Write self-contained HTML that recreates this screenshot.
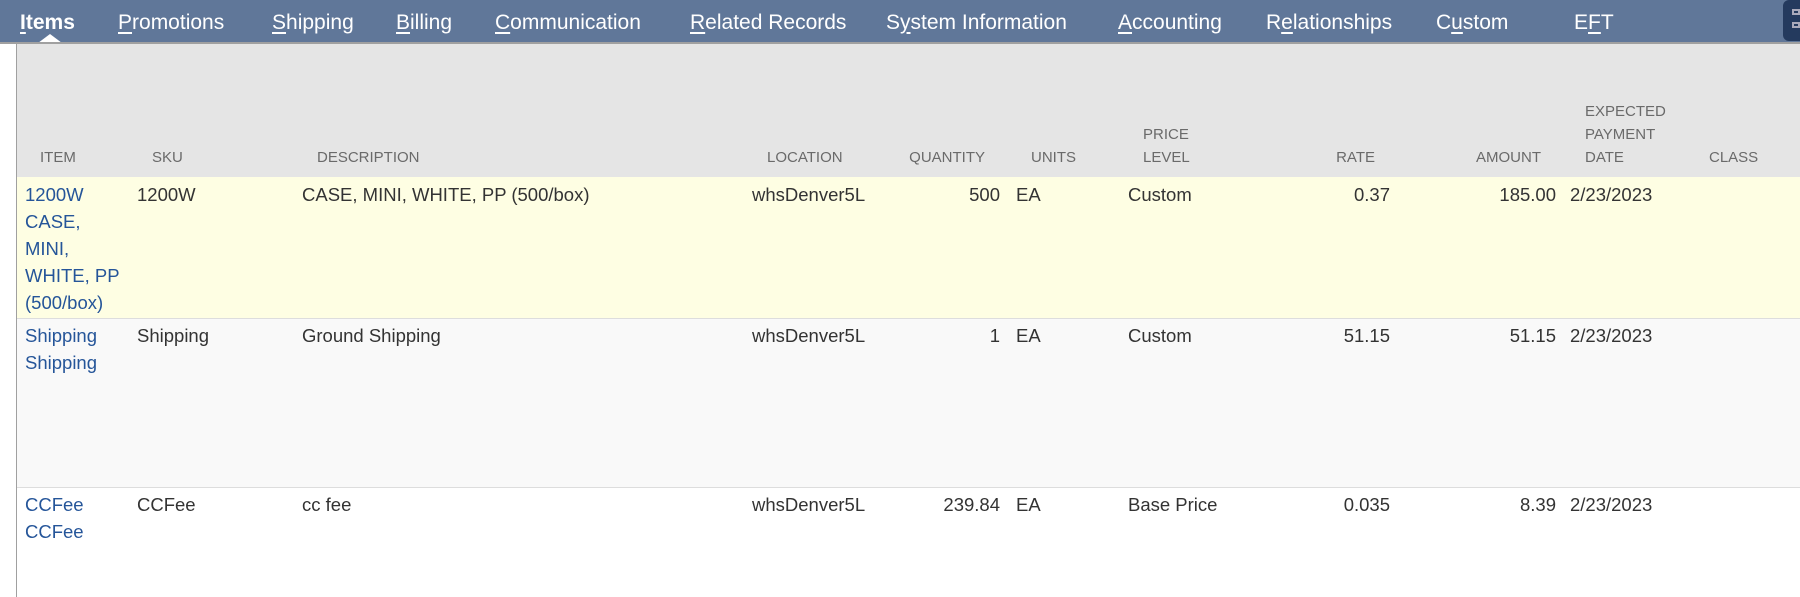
<!DOCTYPE html>
<html><head><meta charset="utf-8"><style>
*{margin:0;padding:0;box-sizing:border-box}
body{width:1800px;height:597px;overflow:hidden;background:#fff;font-family:"Liberation Sans",sans-serif;position:relative}
.bar{position:absolute;left:0;top:0;width:1800px;height:42px;background:#607799}
.tab{position:absolute;top:11px;font-size:21px;color:#fff;white-space:nowrap;letter-spacing:0px}
.tab u{text-decoration:underline;text-underline-offset:3px}
.line{position:absolute;left:0;top:42px;width:1800px;height:2px;background:#a0a0a0}
.lb{position:absolute;left:16px;top:44px;width:1px;height:553px;background:#a0a0a0}
.hdr{position:absolute;left:17px;top:44px;width:1783px;height:133px;background:#e5e5e5}
.h{position:absolute;font-size:15px;color:#6a6a6a;line-height:23px;white-space:nowrap}
.row{position:absolute;left:17px;width:1783px;border-bottom:1px solid #ddd}
.c{position:absolute;font-size:18.5px;color:#333;line-height:27px;white-space:nowrap}
.a{color:#255599}
.r{text-align:right}
</style></head><body>
<div class="bar"></div>
<div class="tab" style="left:20px;font-weight:bold"><u>I</u>tems</div>
<div style="position:absolute;left:38px;top:34px;width:0;height:0;border-left:12px solid transparent;border-right:12px solid transparent;border-bottom:9px solid #fff"></div>
<div class="tab" style="left:118px"><u>P</u>romotions</div>
<div class="tab" style="left:272px"><u>S</u>hipping</div>
<div class="tab" style="left:396px"><u>B</u>illing</div>
<div class="tab" style="left:495px"><u>C</u>ommunication</div>
<div class="tab" style="left:690px"><u>R</u>elated Records</div>
<div class="tab" style="left:886px">S<u>y</u>stem Information</div>
<div class="tab" style="left:1118px"><u>A</u>ccounting</div>
<div class="tab" style="left:1266px">R<u>e</u>lationships</div>
<div class="tab" style="left:1436px">C<u>u</u>stom</div>
<div class="tab" style="left:1574px">E<u>F</u>T</div>
<div style="position:absolute;left:1783px;top:0;width:30px;height:41px;background:#243a5e;border-radius:6px"></div>
<div style="position:absolute;left:1792px;top:9px;width:8px;height:6px;border:2px solid #aab"></div>
<div style="position:absolute;left:1792px;top:22px;width:8px;height:6px;border:2px solid #aab"></div>
<div class="line"></div>
<div class="hdr"></div>
<div class="lb"></div>
<div class="h" style="left:40px;top:146px">ITEM</div>
<div class="h" style="left:152px;top:146px">SKU</div>
<div class="h" style="left:317px;top:146px">DESCRIPTION</div>
<div class="h" style="left:767px;top:146px">LOCATION</div>
<div class="h r" style="left:885px;width:100px;top:146px">QUANTITY</div>
<div class="h" style="left:1031px;top:146px">UNITS</div>
<div class="h" style="left:1143px;top:123px">PRICE<br>LEVEL</div>
<div class="h r" style="left:1275px;width:100px;top:146px">RATE</div>
<div class="h r" style="left:1441px;width:100px;top:146px">AMOUNT</div>
<div class="h" style="left:1585px;top:100px">EXPECTED<br>PAYMENT<br>DATE</div>
<div class="h" style="left:1709px;top:146px">CLASS</div>

<div class="row" style="top:177px;height:142px;background:#fefee3"></div>
<div class="row" style="top:319px;height:169px;background:#f9f9f9"></div>

<div class="c a" style="left:25px;top:181px">1200W<br>CASE,<br>MINI,<br>WHITE, PP<br>(500/box)</div>
<div class="c" style="left:137px;top:181px">1200W</div>
<div class="c" style="left:302px;top:181px">CASE, MINI, WHITE, PP (500/box)</div>
<div class="c" style="left:752px;top:181px">whsDenver5L</div>
<div class="c r" style="left:900px;width:100px;top:181px">500</div>
<div class="c" style="left:1016px;top:181px">EA</div>
<div class="c" style="left:1128px;top:181px">Custom</div>
<div class="c r" style="left:1290px;width:100px;top:181px">0.37</div>
<div class="c r" style="left:1456px;width:100px;top:181px">185.00</div>
<div class="c" style="left:1570px;top:181px">2/23/2023</div>

<div class="c a" style="left:25px;top:322px">Shipping<br>Shipping</div>
<div class="c" style="left:137px;top:322px">Shipping</div>
<div class="c" style="left:302px;top:322px">Ground Shipping</div>
<div class="c" style="left:752px;top:322px">whsDenver5L</div>
<div class="c r" style="left:900px;width:100px;top:322px">1</div>
<div class="c" style="left:1016px;top:322px">EA</div>
<div class="c" style="left:1128px;top:322px">Custom</div>
<div class="c r" style="left:1290px;width:100px;top:322px">51.15</div>
<div class="c r" style="left:1456px;width:100px;top:322px">51.15</div>
<div class="c" style="left:1570px;top:322px">2/23/2023</div>

<div class="c a" style="left:25px;top:491px">CCFee<br>CCFee</div>
<div class="c" style="left:137px;top:491px">CCFee</div>
<div class="c" style="left:302px;top:491px">cc fee</div>
<div class="c" style="left:752px;top:491px">whsDenver5L</div>
<div class="c r" style="left:900px;width:100px;top:491px">239.84</div>
<div class="c" style="left:1016px;top:491px">EA</div>
<div class="c" style="left:1128px;top:491px">Base Price</div>
<div class="c r" style="left:1290px;width:100px;top:491px">0.035</div>
<div class="c r" style="left:1456px;width:100px;top:491px">8.39</div>
<div class="c" style="left:1570px;top:491px">2/23/2023</div>
</body></html>
